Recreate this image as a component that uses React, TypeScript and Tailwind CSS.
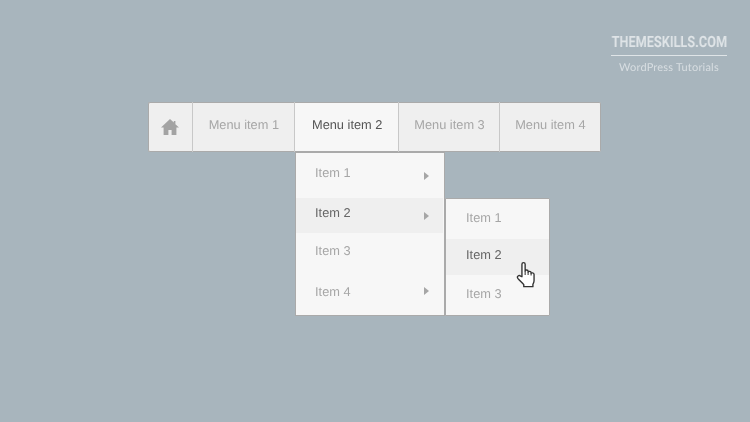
const topItems = [
  { label: "Menu item 1", width: "w-[102px]" },
  { label: "Menu item 2", width: "w-[104px]", active: true },
  { label: "Menu item 3", width: "w-[100px]" },
  { label: "Menu item 4", width: "w-[102px]" },
];

const Arrow = ({ className }: { className: string }) => (
  <svg width="5" height="8" viewBox="0 0 5 8" className={`absolute right-[14px] ${className}`}>
    <path d="M0 0 L5 4 L0 8 Z" fill="#a6a6a6" />
  </svg>
);

const HomeIcon = () => (
  <svg width="18" height="18" viewBox="0 0 18 18">
    <path d="M9 1 L12.8 4.6 V3 H14.4 V6.2 L18 9.6 H15.4 V17 H10.6 V12 H7.4 V17 H2.6 V9.6 H0 Z" fill="#a3a3a3" />
  </svg>
);

const HandCursor = () => (
  <svg
    width="20"
    height="27"
    viewBox="0 0 17.5 25"
    preserveAspectRatio="none"
    className="absolute left-[70px] top-[22px]"
  >
    <path
      d="M5.2 14.6 V3 C5.2 1 8 1 8 3 V9.2 C8 8 10.6 8 10.6 9.6 V10.4 C10.6 9.2 13.2 9.2 13.2 10.8 V11.6 C13.2 10.6 15.8 10.6 15.8 12.4 V18 C15.8 19.6 15.2 20.6 14.8 21.6 V23.8 H6.8 V21.8 C5.4 20 3.4 18.4 1.6 16 C0.4 14.2 2.6 12.6 4 14 Z"
      fill="#ffffff"
      stroke="#333333"
      strokeWidth="1.2"
      strokeLinejoin="round"
    />
    <path d="M8 9.2 V13 M10.6 10.4 V13 M13.2 11.6 V13.4" stroke="#333333" strokeWidth="0.9" fill="none" />
  </svg>
);

export default function App() {
  return (
    <div className="w-[750px] h-[422px] overflow-hidden bg-[#a8b5bd] font-['Liberation_Sans',Arial,sans-serif] [text-rendering:geometricPrecision]">
      {/* logo */}
      <div className="flex justify-end pt-[33px] pr-[23px]">
        <div className="flex w-[116px] flex-col items-center">
          <div className="h-[22px] scale-x-[0.82] whitespace-nowrap font-['Roboto',sans-serif] text-[15.5px] leading-[18px] font-bold text-[#dfe4e7] [will-change:transform]">
            THEMESKILLS.COM
          </div>
          <div className="h-px w-full bg-[#dfe4e7]" />
          <div className="mt-[4px] whitespace-nowrap font-['Lato',sans-serif] text-[11px] leading-[15px] tracking-[0.2px] text-[#d8dee2] [will-change:transform]">
            WordPress Tutorials
          </div>
        </div>
      </div>

      {/* nav bar */}
      <nav className="ml-[148px] mt-[27px] flex h-[50px] w-[453px] gap-px rounded-[2px] bg-[#c8c8c8] [will-change:transform]">
        <div className="flex w-[44px] items-center justify-center rounded-l-[2px] border border-r-0 border-[#aaaaaa] bg-[#efefef]">
          <HomeIcon />
        </div>
        {topItems.map((item, i) => (
          <div
            key={item.label}
            className={`relative flex items-center justify-center border-y border-[#aaaaaa] pb-[5px] pl-px text-[12.8px] ${item.width} ${
              item.active ? "bg-[#f7f7f7] text-[#555555]" : "bg-[#efefef] text-[#a6a6a6]"
            } ${i === 3 ? "rounded-r-[2px] border-r" : ""}`}
          >
            {item.label}
            {item.active && <Dropdown />}
          </div>
        ))}
      </nav>
    </div>
  );
}

function Dropdown() {
  return (
    <div className="absolute left-0 top-[49px] flex h-[164px] w-[150px] flex-col border border-[#aaaaaa] bg-[#f7f7f7] pr-px text-[12.8px] text-[#a6a6a6]">
      <div className="relative flex h-[45px] items-center pl-[19px] pb-[5px]">
        Item 1
        <Arrow className="top-[19px]" />
      </div>
      <div className="relative flex h-[35px] items-center bg-[#efefef] pl-[19px] pb-[5px] text-[#666666]">
        Item 2
        <Arrow className="top-[14px]" />
      </div>
      <div className="flex h-[38px] items-center pl-[19px] pb-[2px]">Item 3</div>
      <div className="relative flex h-[44px] items-center pl-[19px] pb-[3px]">
        Item 4
        <Arrow className="top-[16px]" />
      </div>
      <div className="absolute left-[149px] top-[45px] flex h-[118px] w-[105px] flex-col rounded-r-[1px] border border-[#aaaaaa] bg-[#f7f7f7]">
        <div className="flex h-[40px] items-center pl-[20px] pb-[2px]">Item 1</div>
        <div className="relative flex h-[36px] items-center bg-[#efefef] pl-[20px] pb-[4px] text-[#666666]">
          Item 2
          <HandCursor />
        </div>
        <div className="flex h-[40px] items-center pl-[20px] pb-[2px]">Item 3</div>
      </div>
    </div>
  );
}
